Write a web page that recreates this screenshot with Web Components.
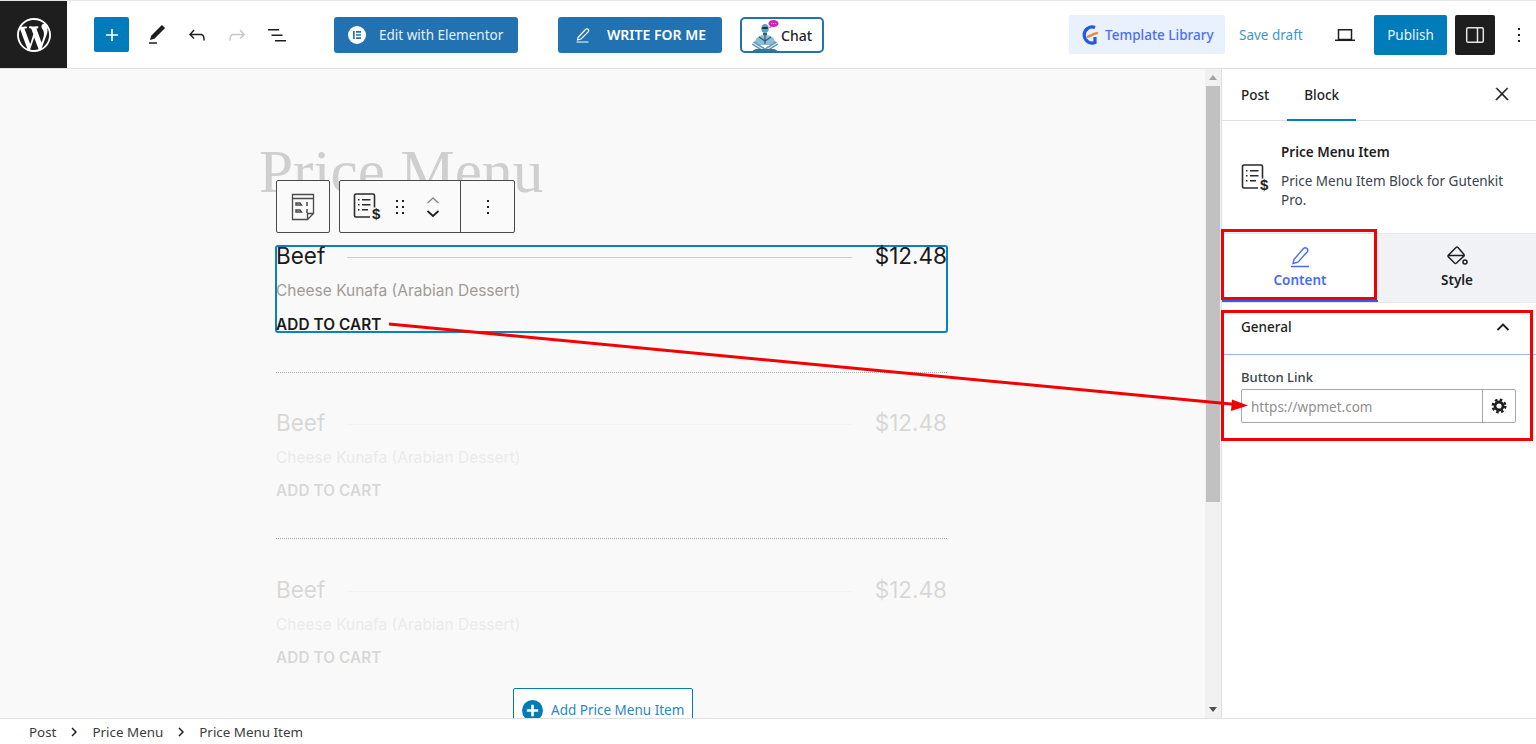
<!DOCTYPE html>
<html lang="en">
<head>
<meta charset="utf-8">
<title>Price Menu</title>
<style>
	html, body { margin: 0; height: 100%; overflow: hidden; background: #fff; }
	body { font-family: "Noto Sans", sans-serif; color: #1e1e1e; }
	editor-app { width: 1536px; height: 744px; }
</style>
</head>
<body>
<editor-app></editor-app>
<script>
const PRICE_ICON = /*html*/`<svg viewBox="0 0 28 30" width="28" height="30" fill="none" stroke="#2b2b2b" stroke-width="1.6">
	<path d="M21.5 14.5V2.5a1.5 1.5 0 0 0-1.5-1.5H3A1.5 1.5 0 0 0 1.500 2.500v20A1.500 1.500 0 0 0 3 24h14"/>
	<path d="M5 6.800h1.500M5 11.800h1.500M5 16.800h1.500M9 6.800h8.500M9 11.800h8.500M9 16.800h6"/>
	<text x="19" y="25.500" font-family="Liberation Sans, sans-serif" font-size="15" font-weight="700" fill="#222" stroke="none" stroke-width=".3">$</text>
</svg>`;

class TopBar extends HTMLElement {
	constructor(){
		super();
		this.attachShadow({mode:"open"});
		this.shadowRoot.innerHTML = /*html*/`
			<style>
				:host {
					display: flex;
					align-items: center;
					height: 67px;
					border-top: 1px solid #e6e6e6;
					border-bottom: 1px solid #e0e0e0;
					box-sizing: content-box;
					background: #fff;
					font-size: 13.500px;
				}
				.logo { width: 67px; height: 67px; background: #1e1e1e; display: flex; align-items: center; justify-content: center; }
				.add { width: 35px; height: 35px; margin-left: 27px; background: #007cba; border-radius: 2px; display: flex; align-items: center; justify-content: center; }
				.tools { display: flex; margin-left: 16px; }
				.tools svg { display: block; margin-right: 16px; }
				.btn { height: 36px; box-sizing: border-box; background: #2271b1; border-radius: 3px; color: #fff; display: flex; align-items: center; }
				.elementor { width: 184px; margin-left: 29px; padding-left: 14px; gap: 13px; color: #e8f0f6; }
				.elementor i { width: 18px; height: 18px; border-radius: 50%; background: #fff; display: flex; align-items: center; justify-content: center; }
				.write { width: 164px; margin-left: 40px; padding-left: 17px; gap: 16px; font-weight: 600; font-size: 14px; }
				.chat { width: 84px; margin-left: 18px; background: #fff; border: 2px solid #2271b1; border-radius: 5px; color: #1d2327; padding: 1px 0 0 8px; font-weight: 500; font-size: 14px; gap: 1px; overflow: hidden; }
				.right { margin-left: auto; display: flex; align-items: center; }
				.library { width: 156px; height: 39px; box-sizing: border-box; background: #e9f0fe; border-radius: 2px; display: flex; align-items: center; padding-left: 11px; gap: 5px; color: #4a6ff0; font-weight: 500; white-space: nowrap; }
				.save { margin-left: 14px; color: #3f97c9; width: 64px; white-space: nowrap; }
				.view { margin-left: 30px; display: block; }
				.publish { width: 73px; height: 40px; margin-left: 17px; background: #007cba; color: #e8f3f9; border-radius: 2px; display: flex; align-items: center; justify-content: center; }
				.panel { width: 40px; height: 40px; margin-left: 8px; background: #1e1e1e; border-radius: 2px; display: flex; align-items: center; justify-content: center; }
				.more { margin: 0 5px 0 12px; display: block; }
			</style>
			<div class="logo"><svg width="34" height="34" viewBox="0 0 20 20" fill="#fff"><path d="M20 10c0-5.510-4.490-10-10-10C4.480 0 0 4.490 0 10c0 5.520 4.480 10 10 10 5.510 0 10-4.480 10-10zM7.780 15.370L4.370 6.220c.55-.02 1.170-.08 1.170-.08.5-.06.44-1.130-.06-1.110 0 0-1.450.11-2.370.11-.18 0-.37 0-.58-.01C4.120 2.690 6.870 1.110 10 1.110c2.330 0 4.450.87 6.050 2.340-.68-.11-1.650.39-1.650 1.580 0 .74.45 1.360.9 2.100.35.61.55 1.360.55 2.460 0 1.490-1.400 5-1.400 5l-3.030-8.370c.54-.02.82-.17.82-.17.5-.05.44-1.250-.06-1.220 0 0-1.440.12-2.380.12-.87 0-2.330-.12-2.330-.12-.5-.03-.56 1.200-.06 1.220l.92.08 1.260 3.410zM17.410 10c.24-.64.74-1.870.43-4.250.7 1.290 1.050 2.710 1.050 4.250 0 3.290-1.730 6.240-4.400 7.780.97-2.590 1.940-5.200 2.920-7.780zM6.100 18.090C3.120 16.650 1.110 13.530 1.110 10c0-1.300.23-2.480.72-3.590C3.250 10.300 4.670 14.200 6.100 18.090zm4.030-6.630l2.580 6.980c-.86.29-1.760.45-2.710.45-.79 0-1.570-.11-2.290-.33.81-2.380 1.620-4.740 2.420-7.100z"/></svg></div>
			<div class="add"><svg width="24" height="24" viewBox="0 0 24 24" fill="#fff"><path d="M18 11.200h-5.200V6h-1.600v5.200H6v1.600h5.200V18h1.600v-5.200H18z"/></svg></div>
			<div class="tools">
				<svg width="24" height="24" viewBox="0 0 24 24" fill="#1e1e1e"><path d="M20.100 5.100L16.900 2 6.200 12.700l-1.300 4.400 4.500-1.300L20.100 5.100zM4 20.800h8v-1.500H4v1.500z"/></svg>
				<svg width="24" height="24" viewBox="0 0 24 24" fill="#1e1e1e"><path d="M18.300 11.700c-.6-.6-1.400-.9-2.300-.9H6.700l2.900-3.300-1.100-1-4.500 5L8.500 16l1-1-2.700-2.700H16c.5 0 .9.2 1.300.5 1 1 1 3.400 1 4.500v.3h1.500v-.2c0-1.500 0-4.300-1.500-5.700z"/></svg>
				<svg width="24" height="24" viewBox="0 0 24 24" fill="#c8c8c8"><path d="M15.600 6.500l-1.100 1 2.900 3.300H8c-.9 0-1.700.3-2.300.9-1.400 1.500-1.400 4.200-1.400 5.600v.2h1.500v-.3c0-1.100 0-3.500 1-4.500.3-.3.7-.5 1.300-.5h9.200L14.500 15l1.100 1.100 4.600-4.600-4.600-5z"/></svg>
				<svg width="24" height="24" viewBox="0 0 24 24" fill="#1e1e1e"><path d="M3 6h11v1.500H3V6zm3.500 5.500h11V13h-11v-1.500zM21 17H10v1.500h11V17z"/></svg>
			</div>
			<div class="btn elementor"><i><svg width="10" height="10" viewBox="0 0 10 10" fill="#2271b1"><path d="M1 1h1.700v8H1zM4 1h5v1.700H4zM4 4.150h5v1.700H4zM4 7.300h5V9H4z"/></svg></i>Edit with Elementor</div>
			<div class="btn write"><svg width="16" height="16" viewBox="0 0 16 16" fill="none" stroke="#fff" stroke-width="1.200"><path d="M3 10.500 10.500 2.500a1.700 1.700 0 0 1 2.700 2.300L6 12l-3.500 1zM1.500 15h12"/></svg>WRITE FOR ME</div>
			<div class="btn chat"><svg width="30" height="34" viewBox="0 0 30 34" style="flex:none;margin-top:1px">
				<ellipse cx="23.500" cy="4.500" rx="5" ry="3.500" fill="#d61fb8"/>
				<path d="M20 7l-1 2 3-1z" fill="#d61fb8"/>
				<path d="M21.500 4.500h.8M23.200 4.500h.8M24.900 4.500h.8" stroke="#f7c9ef"/>
				<ellipse cx="15" cy="9.500" rx="3.800" ry="4.500" fill="#5f9dbf"/>
				<rect x="12.300" y="8" width="5.400" height="2" fill="#12324a"/>
				<path d="M13 14h4v3h-4z" fill="#2f5f7c"/>
				<path d="M5 26c-1-6 3-10 10-10s11 4 10 10z" fill="#8dbdd4"/>
				<path d="M15 16v9M9 18l6 4 6-4" stroke="#2c5c78" stroke-width="1.200" fill="none"/>
				<path d="M3 24l11 7M27 24l-11 7" stroke="#5d94b2" stroke-width="4"/>
				<path d="M3 24l11 7M27 24l-11 7" stroke="#d6e8f0" stroke-width="1.300"/>
				<path d="M1 34c2-3 4-4 6-4h16c2 0 4 1 6 4z" fill="#3d7492"/>
			</svg>Chat</div>
			<div class="right">
				<div class="library"><svg width="20" height="24" viewBox="0 0 20 24" fill="none"><path d="M15 4.500A8 8 0 1 0 15 19.500V14" stroke="#2058e8" stroke-width="3.200"/><path d="M7 13.500c3 1 5-3.500 11-3.500" stroke="#f28a3c" stroke-width="2.600"/></svg>Template Library</div>
				<div class="save">Save draft</div>
				<svg class="view" width="24" height="24" viewBox="0 0 24 24" fill="none" stroke="#1e1e1e" stroke-width="1.500"><path d="M5.500 6.700h13v9.800h-13z"/><path d="M2 17.300h20" /></svg>
				<div class="publish">Publish</div>
				<div class="panel"><svg width="24" height="24" viewBox="0 0 24 24" fill="none" stroke="#e6e6e6" stroke-width="1.500"><rect x="3.700" y="4.700" width="16.600" height="14.600" rx="1.500"/><path d="M14.500 4.700v14.600"/></svg></div>
				<svg class="more" width="24" height="24" viewBox="0 0 24 24" fill="#1e1e1e"><path d="M13 19h-2v-2h2v2zm0-6h-2v-2h2v2zm0-6h-2V5h2v2z"/></svg>
			</div>
		`;
	}
}
customElements.define("top-bar",TopBar);

class PriceItem extends HTMLElement {
	constructor(){
		super();
		this.attachShadow({mode:"open"});
		this.shadowRoot.innerHTML = /*html*/`
			<style>
				:host {
					display: block;
					font-family: Inter, sans-serif;
					height: 88px;
					box-sizing: border-box;
					margin: 0 -1px;
					border: 2px solid transparent;
					border-radius: 3px;
				}
				:host([selected]) { border-color: #0a82bd; }
				:host(:not([selected])) .row, :host(:not([selected])) .desc, :host(:not([selected])) .cart { opacity: .15; }
				:host(:not([selected])) .row { margin-top: -1px; }
				:host(:not([selected])) .cart { margin-top: 13px; }
				.row { display: flex; align-items: center; height: 22px; margin: -2px -1px 0; font-size: 22.500px; color: #1a1a1a; line-height: 22px; }
				.line { flex: 1; height: 1px; background: #c9cdd0; margin: 3px 23px 0 22px; }
				.desc { margin: 14px 0 0 -1px; font-size: 15.500px; line-height: 20px; color: #a19b97; }
				.cart { margin: 14px 0 0 -1px; font-size: 15.300px; line-height: 20px; font-weight: 600; color: #1a1a1a; letter-spacing: .1px; }
			</style>
			<div class="row"><span>Beef</span><span class="line"></span><span>$12.48</span></div>
			<div class="desc">Cheese Kunafa (Arabian Dessert)</div>
			<div class="cart">ADD TO CART</div>
		`;
	}
}
customElements.define("price-item",PriceItem);

class BlockToolbar extends HTMLElement {
	constructor(){
		super();
		this.attachShadow({mode:"open"});
		this.shadowRoot.innerHTML = /*html*/`
			<style>
				:host { display: flex; gap: 9px; position: absolute; left: 276px; top: 111px; height: 53px; }
				.box { background: #fafafa; border: 1px solid #4a4a4a; border-radius: 2px; box-sizing: border-box; height: 53px; display: flex; align-items: center; }
				.one { width: 54px; justify-content: center; }
				.two { width: 176px; }
				.main { width: 121px; height: 100%; border-right: 1px solid #4a4a4a; display: flex; align-items: center; padding-left: 13px; box-sizing: border-box; }
				.main > svg:first-child { margin-top: 2px; }
				.mover { display: flex; flex-direction: column; margin-left: 9px; }
				.mover svg { display: block; margin: -3px 0; }
				.kebab { flex: 1; display: flex; justify-content: center; }
			</style>
			<div class="box one"><svg width="26" height="30" viewBox="0 0 26 30" fill="none" stroke="#4a4a4a" stroke-width="1.300">
				<path d="M2.500 2.500h21v19l-6 6h-15zM2.500 6.500h21M17.500 27.500v-6h6"/>
				<path d="M6 11h4l1.500 2H6zM6 18h4l1.500 2H6zM17 10v4M17 17v4" stroke-width="1.500"/>
			</svg></div>
			<div class="box two">
				<div class="main">
					${PRICE_ICON}
					<svg width="24" height="24" viewBox="0 0 24 24" fill="#1e1e1e" style="margin-left:7px"><path d="M8 7h2V5H8v2zm0 6h2v-2H8v2zm0 6h2v-2H8v2zm6-14v2h2V5h-2zm0 8h2v-2h-2v2zm0 6h2v-2h-2v2z"/></svg>
					<div class="mover">
						<svg width="24" height="20" viewBox="0 0 24 20" fill="none" stroke="#8a8a8a" stroke-width="1.500"><path d="M6.500 13 12 8l5.500 5"/></svg>
						<svg width="24" height="20" viewBox="0 0 24 20" fill="none" stroke="#1e1e1e" stroke-width="1.700"><path d="M6.500 7 12 12l5.500-5"/></svg>
					</div>
				</div>
				<div class="kebab"><svg width="24" height="24" viewBox="0 0 24 24" fill="#1e1e1e"><path d="M13 19h-2v-2h2v2zm0-6h-2v-2h2v2zm0-6h-2V5h2v2z"/></svg></div>
			</div>
		`;
	}
}
customElements.define("block-toolbar",BlockToolbar);

class EditorCanvas extends HTMLElement {
	constructor(){
		super();
		this.attachShadow({mode:"open"});
		this.shadowRoot.innerHTML = /*html*/`
			<style>
				:host { display: block; position: relative; flex: 1; background: #f9f9f9; overflow: hidden; }
				h1 { margin: 69px 0 0 259px; font: 400 61.300px/66px "Liberation Serif", serif; color: #cfcfcf; height: 66px; }
				.list { margin: 41px 0 0 276px; width: 671px; }
				.sep { height: 0; border-top: 1px dotted #a8a8a8; margin-top: 39px; }
				.next { margin-top: 38px; }
				.last { margin-top: 39px; }
				.add { display: flex; align-items: center; gap: 8px; box-sizing: border-box; margin: 22px 0 0 237px; width: 180px; height: 44px; padding: 0 6px 0 8px; background: #fff; border: 1px solid #007cba; border-radius: 2px; color: #2a87bf; font: 13.500px "Noto Sans", sans-serif; white-space: nowrap; }
				.add i { width: 21px; height: 21px; border-radius: 50%; background: #007cba; display: flex; align-items: center; justify-content: center; }
			</style>
			<h1>Price Menu</h1>
			<block-toolbar></block-toolbar>
			<div class="list">
				<price-item selected></price-item>
				<div class="sep"></div>
				<price-item class="next"></price-item>
				<div class="sep"></div>
				<price-item class="last"></price-item>
				<div class="add"><i><svg width="21" height="21" viewBox="0 0 24 24" fill="#fff"><path d="M18.500 10.500h-5v-5h-3v5h-5v3h5v5h3v-5h5z"/></svg></i>Add Price Menu Item</div>
			</div>
		`;
	}
}
customElements.define("editor-canvas",EditorCanvas);

class FakeScrollbar extends HTMLElement {
	constructor(){
		super();
		this.attachShadow({mode:"open"});
		this.shadowRoot.innerHTML = /*html*/`
			<style>
				:host { display: flex; flex-direction: column; align-items: center; width: 16px; background: #f1f1f1; box-sizing: border-box; }
				.up, .down { width: 0; height: 0; border: 4px solid transparent; }
				.up { border-bottom: 5px solid #a3a3a3; border-top: 0; margin-top: 6px; }
				.thumb { width: 14px; height: 416px; background: #c1c1c1; margin-top: 6px; }
				.down { border-top: 5px solid #505050; border-bottom: 0; margin-top: auto; margin-bottom: 6px; }
			</style>
			<div class="up"></div><div class="thumb"></div><div class="down"></div>
		`;
	}
}
customElements.define("fake-scrollbar",FakeScrollbar);

class SettingsPanel extends HTMLElement {
	constructor(){
		super();
		this.attachShadow({mode:"open"});
		this.shadowRoot.innerHTML = /*html*/`
			<style>
				:host { display: block; width: 314px; background: #fff; border-left: 1px solid #e0e0e0; box-sizing: content-box; font-size: 13.500px; color: #1e1e1e; }
				.tabs { display: flex; height: 52px; box-sizing: border-box; border-bottom: 1px solid #e0e0e0; padding-left: 19px; align-items: stretch; position: relative; }
				.tabs span { display: flex; align-items: center; font-weight: 500; margin-right: 35px; }
				.tabs .on { position: relative; }
				.tabs .on::after { content: ""; position: absolute; left: -17px; right: -17px; bottom: -1px; height: 2px; background: #007cba; }
				.tabs svg { margin: 15px 24px 0 auto; }
				.card { display: flex; height: 112px; box-sizing: border-box; padding: 22px 18px 0 19px; gap: 12px; }
				.card svg { flex: none; margin-top: 21px; }
				.card b { display: block; font-weight: 600; line-height: 18px; margin-bottom: 11px; }
				.card p { margin: 0; line-height: 19px; color: #3c434a; width: 232px; }
				.switch { display: flex; height: 70px; box-sizing: border-box; background: #f0f2f6; border-top: 1px solid #e4e6ea; border-bottom: 1px solid #e4e6ea; }
				.switch div { flex: 1; display: flex; flex-direction: column; align-items: center; gap: 3px; padding-top: 10px; font-weight: 600; }
				.switch .on { background: #fff; color: #4a6cf0; flex: none; width: 156px; box-shadow: inset 0 -2px 0 #2f5fe8; }
				.general { display: flex; justify-content: space-between; align-items: center; height: 52px; padding: 0 21px 3px 19px; box-sizing: border-box; border-bottom: 1px solid #9db4f5; font-weight: 500; }
				label { display: block; margin: 13px 0 0 19px; line-height: 18px; font-weight: 500; color: #3c434a; font-size: 13px; }
				.field { display: flex; margin: 3px 20px 0 19px; height: 34px; box-sizing: border-box; border: 1px solid #a7a7a7; border-radius: 2px; }
				.field span { flex: 1; padding-left: 9px; line-height: 34px; color: #8f8f8f; }
				.field i { width: 32px; border-left: 1px solid #a7a7a7; display: flex; align-items: center; justify-content: center; }
			</style>
			<div class="tabs"><span>Post</span><span class="on">Block</span>
				<svg width="20" height="20" viewBox="0 0 24 24" fill="#1e1e1e" stroke="#1e1e1e" stroke-width=".6"><path d="M13 11.800l6.100-6.300-1-1-6.100 6.200-6.100-6.200-1 1 6.100 6.300-6.500 6.700 1 1 6.500-6.600 6.500 6.600 1-1z"/></svg>
			</div>
			<div class="card">${PRICE_ICON}<div><b>Price Menu Item</b><p>Price Menu Item Block for Gutenkit Pro.</p></div></div>
			<div class="switch">
				<div class="on"><svg width="24" height="24" viewBox="0 0 24 24" fill="none" stroke="#4a6cf0" stroke-width="1.400"><path d="M6 15.500 15.500 4.500a2.500 2.500 0 0 1 3.800 3.200L10 18.200l-5 1.300zM3 22.500h18"/></svg>Content</div>
				<div><svg width="24" height="24" viewBox="0 0 24 24" fill="none" stroke="#1e1e1e" stroke-width="1.500"><path d="M11 3.500 3.500 11a1.500 1.500 0 0 0 0 2l6 6a1.500 1.500 0 0 0 2 0L19 12a1.500 1.500 0 0 0 0-1.500L13 3.500a1.500 1.500 0 0 0-2 0zM3 11.500h16.500"/><circle cx="20" cy="18" r="2" /></svg>Style</div>
			</div>
			<div class="general">General<svg width="24" height="24" viewBox="0 0 24 24" fill="none" stroke="#1e1e1e" stroke-width="1.800"><path d="M6.500 15 12 9.500l5.500 5.500"/></svg></div>
			<label>Button Link</label>
			<div class="field"><span>https://wpmet.com</span><i><svg width="18" height="18" viewBox="0 0 18 18" fill="none" stroke="#1e1e1e"><circle cx="9" cy="9" r="4" stroke-width="2.800"/><circle cx="9" cy="9" r="6.300" stroke-width="2.400" stroke-dasharray="2.600 2.350"/></svg></i></div>
		`;
	}
}
customElements.define("settings-panel",SettingsPanel);

class CrumbBar extends HTMLElement {
	constructor(){
		super();
		this.attachShadow({mode:"open"});
		this.shadowRoot.innerHTML = /*html*/`
			<style>
				:host { display: flex; align-items: center; height: 26px; box-sizing: border-box; background: #fff; border-top: 1px solid #e0e0e0; padding-left: 29px; font-size: 13.400px; color: #3c3c3c; }
				svg { margin: 0 15px; }
			</style>
			<span>Post</span>
			<svg width="6" height="10" viewBox="0 0 6 10" fill="none" stroke="#1e1e1e" stroke-width="1.500"><path d="m1 1 4 4-4 4"/></svg>
			<span>Price Menu</span>
			<svg width="6" height="10" viewBox="0 0 6 10" fill="none" stroke="#1e1e1e" stroke-width="1.500"><path d="m1 1 4 4-4 4"/></svg>
			<span>Price Menu Item</span>
		`;
	}
}
customElements.define("crumb-bar",CrumbBar);

// red markup drawn over the screenshot, free placed on purpose
class RedMarkup extends HTMLElement {
	constructor(){
		super();
		this.attachShadow({mode:"open"});
		this.shadowRoot.innerHTML = /*html*/`
			<style>
				:host { position: absolute; left: 0; top: 0; width: 1536px; height: 744px; pointer-events: none; }
				svg { display: block; }
			</style>
			<svg width="1536" height="744" fill="none" stroke="#f50000" stroke-width="3">
				<rect x="1222.500" y="230.500" width="153" height="68"/>
				<rect x="1222.500" y="311.500" width="309" height="128"/>
				<path d="M389 324 1236 404.500" />
				<path d="M1248 405.500 1232 399.500 1231 411z" fill="#f50000" stroke="none"/>
			</svg>
		`;
	}
}
customElements.define("red-markup",RedMarkup);

class EditorApp extends HTMLElement {
	constructor(){
		super();
		this.attachShadow({mode:"open"});
		this.shadowRoot.innerHTML = /*html*/`
			<style>
				:host { display: flex; flex-direction: column; position: relative; overflow: hidden; }
				.middle { flex: 1; display: flex; min-height: 0; }
			</style>
			<top-bar></top-bar>
			<div class="middle">
				<editor-canvas></editor-canvas>
				<fake-scrollbar></fake-scrollbar>
				<settings-panel></settings-panel>
			</div>
			<crumb-bar></crumb-bar>
			<red-markup></red-markup>
		`;
	}
}
customElements.define("editor-app",EditorApp);
</script>
</body>
</html>
